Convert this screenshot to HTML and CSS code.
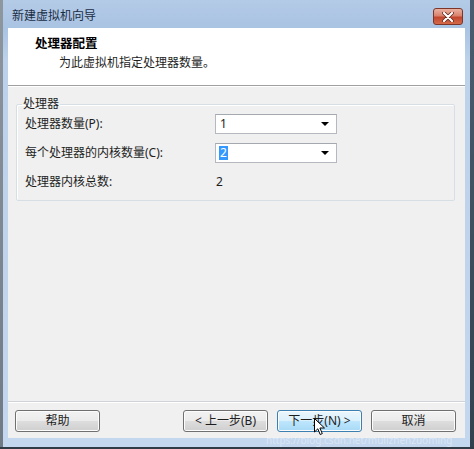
FILE: index.html
```html
<!DOCTYPE html>
<html lang="zh">
<head>
<meta charset="utf-8">
<title>新建虚拟机向导</title>
<link rel="stylesheet" href="styles.css">
</head>
<body>
<div class="screen">
  <div class="row">
    <div class="edge-left"></div>
    <div class="window">
      <div class="titlebar">
        <span class="title">新建虚拟机向导</span>
        <div class="close">
          <svg width="12" height="10" viewBox="0 0 12 10"><path d="M2 1 L10 9 M10 1 L2 9" stroke="#5a2318" stroke-width="3.6" stroke-linecap="round"/><path d="M2 1 L10 9 M10 1 L2 9" stroke="#ffffff" stroke-width="2.2" stroke-linecap="round"/></svg>
        </div>
      </div>
      <div class="client">
        <div class="header">
          <div class="h-title">处理器配置</div>
          <div class="h-sub">为此虚拟机指定处理器数量。</div>
        </div>
        <div class="main">
          <fieldset class="group">
            <legend>处理器</legend>
            <div class="grid">
              <span class="label">处理器数量(P):</span>
              <div class="select"><span class="val">1</span><span class="arrow"></span></div>
              <span class="label">每个处理器的内核数量(C):</span>
              <div class="select"><span class="val sel">2</span><span class="arrow"></span></div>
              <span class="label">处理器内核总数:</span>
              <span class="label total">2</span>
            </div>
          </fieldset>
        </div>
        <div class="footer">
          <button class="btn">帮助</button>
          <div class="spacer"></div>
          <button class="btn">&lt; 上一步(B)</button>
          <button class="btn hot">下一步(N) &gt;</button>
          <button class="btn">取消</button>
          <svg class="cursor" width="12" height="18" viewBox="0 0 12 18"><path d="M0.5 0.5 L0.5 14 L3.8 10.8 L6.2 16.5 L8.3 15.6 L5.9 10 L10.5 10 Z" fill="#ffffff" stroke="#000000" stroke-width="1"/></svg>
        </div>
      </div>
    </div>
    <div class="edge-right"></div>
  </div>
  <div class="edge-bottom"></div>
  <span class="watermark">https://blog.csdn.net/mulizhenzuoming</span>
</div>
</body>
</html>
```

FILE: styles.css
```css
* { box-sizing: border-box; }
html, body { margin: 0; padding: 0; background: #3b4b5c; }
body { font-family: "Noto Sans", "Noto Sans CJK SC", sans-serif; font-size: 12px; color: #1e1e1e; }

.screen { position: relative; width: 474px; height: 449px; display: flex; flex-direction: column; overflow: hidden; }
.row { display: flex; height: 447px; }
.edge-left { width: 3px; background: linear-gradient(#8e969e, #6f7a85); }
.edge-right { flex: 1; background: linear-gradient(#4a5d70, #33414f); }
.edge-bottom { height: 2px; background: #2f3b47; }

.window {
  width: 467px;
  display: flex;
  flex-direction: column;
  padding: 0 5px 9px 5px;
  background: linear-gradient(#b4cbe6 0px, #a9c3e3 28px, #bcd2ea 60px, #c3d7ee 100%);
}

.titlebar { height: 28px; display: flex; align-items: flex-start; justify-content: space-between; }
.title { margin: 9px 0 0 4px; line-height: 14px; font-size: 12px; color: #1b2d45; }
.close {
  margin: 8px 2px 0 0;
  width: 30px; height: 17px;
  border: 1px solid #7c3526;
  border-radius: 3px;
  background: linear-gradient(#eab1a2 0%, #d9826b 45%, #c2462d 55%, #d36a4a 100%);
  display: flex; align-items: center; justify-content: center;
}

.client { height: 410px; display: flex; flex-direction: column; background: #f0f0f0; }

.header { height: 58px; background: #ffffff; border-bottom: 1px solid #a0a0a0; padding: 8px 0 0 27px; }
.h-title { font-weight: bold; font-size: 12.5px; line-height: 16px; color: #000; }
.h-sub { margin: 3px 0 0 24px; line-height: 16px; color: #1e1e1e; }

.main { flex: 1; padding: 10px 10px 0 8px; border-top: 1px solid #ffffff; }
.group { margin: 0; padding: 3px 8px 8px 8px; border: 1px solid #d5dfe5; border-radius: 2px; box-shadow: inset 1px 1px 0 #fff; }
.group legend { margin-left: -3px; padding: 0 1px; line-height: 14px; color: #1e1e1e; }
.grid { display: grid; grid-template-columns: 190px 122px; grid-template-rows: 20px 20px 20px; row-gap: 9px; align-items: center; }
.label { line-height: 16px; }
.total { padding-left: 1px; }

.select {
  height: 20px; width: 122px;
  background: #ffffff;
  border: 1px solid #b5b8be;
  border-top-color: #a4a8af;
  display: flex; align-items: center; justify-content: space-between;
  padding: 0 5px 0 3px;
}
.val { line-height: 14px; padding: 0 1px; }
.val.sel { background: #3399ff; color: #ffffff; }
.arrow { width: 0; height: 0; border-left: 4px solid transparent; border-right: 4px solid transparent; border-top: 4px solid #000; margin-right: 2px; }

.footer {
  position: relative;
  height: 37px;
  border-top: 1px solid #cfd3d7;
  box-shadow: inset 0 1px 0 #ffffff;
  display: flex; align-items: flex-start;
  padding: 8px 9px 0 7px;
  gap: 9px;
}
.spacer { flex: 1; }
.btn {
  width: 85px; height: 22px;
  font-family: inherit; font-size: 12px; color: #1e1e1e;
  border: 1px solid #707070;
  border-radius: 3px;
  background: linear-gradient(#f2f2f2 0%, #ebebeb 50%, #dddddd 51%, #cfcfcf 100%);
  box-shadow: inset 0 0 0 1px #fcfcfc;
  padding: 0;
  line-height: 18px;
}
.btn.hot {
  border-color: #3c7fb1;
  background: linear-gradient(#eaf6fd 0%, #d9f0fc 50%, #bee6fd 51%, #a7d9f5 100%);
}
.watermark {
  position: absolute; left: 266px; top: 434px;
  font-size: 10px; line-height: 12px;
  color: rgba(255,255,255,0.4);
  white-space: nowrap;
  pointer-events: none;
}
.cursor { position: absolute; left: 306px; top: 16px; }
```
